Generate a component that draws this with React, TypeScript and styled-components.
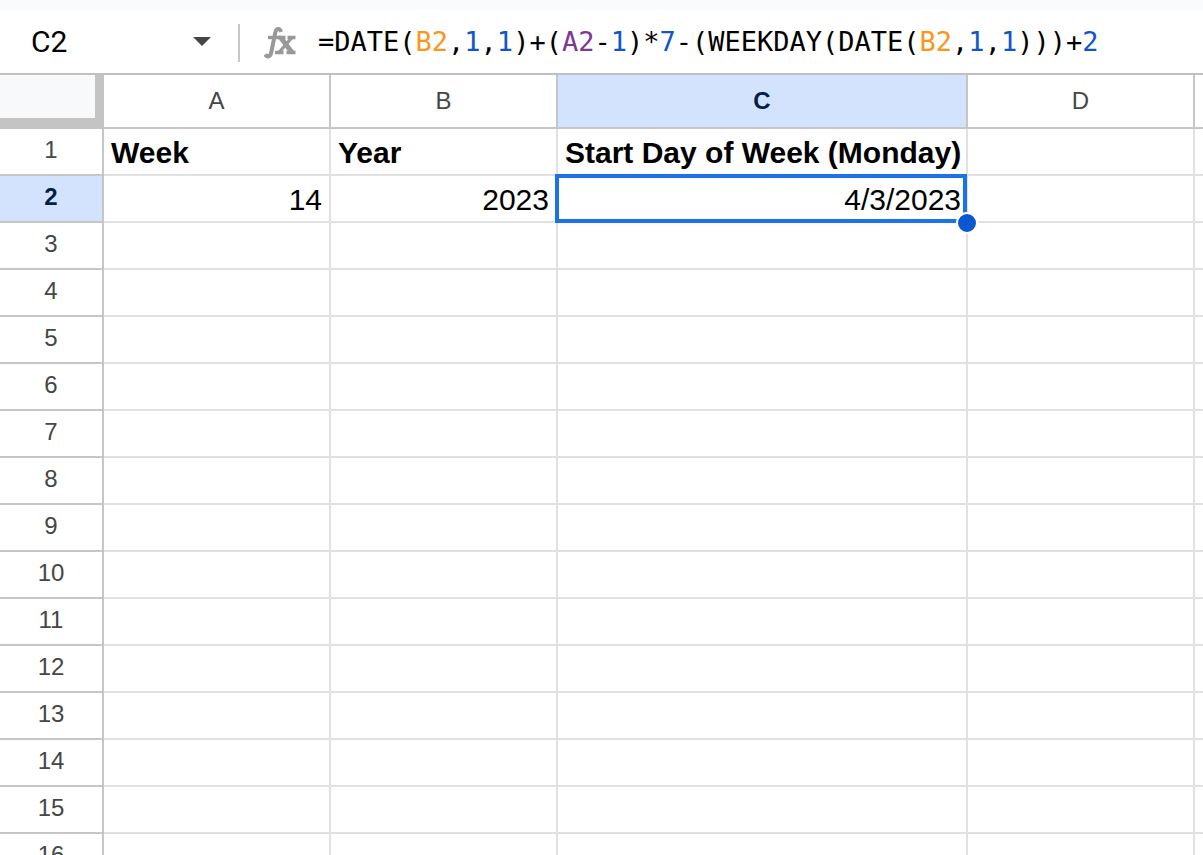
import React from "react";
import styled, { createGlobalStyle } from "styled-components";

const GlobalStyle = createGlobalStyle`
  * { box-sizing: border-box; }
  body { margin: 0; background: #ffffff; overflow: hidden; }
`;

const barFont = `Roboto, "Liberation Sans", sans-serif`;
const sheetFont = `"Liberation Sans", Arial, sans-serif`;
const line = "#c4c7c5";
const gridLine = "#e1e1e1";

const Page = styled.main`
  display: flex;
  flex-direction: column;
  height: 100vh;
  overflow: hidden;
  border-top: 10px solid #f9fbfd;
`;

const FormulaBar = styled.header`
  display: flex;
  align-items: center;
  flex: none;
  height: 65px;
  padding-top: 2px;
  border-bottom: 2px solid #c0c0c0;
`;

const NameBox = styled.div`
  display: flex;
  align-items: center;
  flex: none;
  width: 240px;
  height: 38px;
  padding: 0 19px 2px 23px;
  border-right: 2px solid #c7c7c7;
`;

const NameInput = styled.input`
  flex: 1;
  min-width: 0;
  height: 36px;
  padding: 0 8px;
  border: 0;
  outline: 0;
  background: transparent;
  color: #000000;
  font: 30px ${barFont};
`;

const MenuButton = styled.button`
  display: flex;
  align-items: center;
  justify-content: center;
  width: 34px;
  height: 34px;
  padding: 0;
  border: 0;
  background: transparent;
`;

const FunctionIcon = styled.svg`
  flex: none;
  width: 32px;
  height: 32px;
  margin: 0 22px 0 24px;
`;

const FormulaText = styled.div`
  flex: 1;
  min-width: 0;
  padding-bottom: 2px;
  overflow: hidden;
  outline: 0;
  white-space: pre;
  color: #000000;
  font: 27px/36px "DejaVu Sans Mono", "Liberation Mono", monospace;
`;

const tones = {
  plain: "#000000",
  number: "#1155cc",
  yearRef: "#f7981d",
  weekRef: "#7e3794",
};

type Tone = keyof typeof tones;

const Token = styled.span<{ $tone: Tone }>`
  color: ${(p) => tones[p.$tone]};
`;

const SheetView = styled.section`
  flex: 1;
  min-height: 0;
  overflow: hidden;
`;

const Sheet = styled.table`
  width: 100%;
  table-layout: fixed;
  border-collapse: separate;
  border-spacing: 0;
`;

const Column = styled.col<{ $width?: number }>`
  width: ${(p) => (p.$width ? `${p.$width}px` : "auto")};
`;

const Corner = styled.td`
  padding: 0;
  border-right: 9px solid #c4c4c4;
  border-bottom: 11px solid #c4c4c4;
  background: #f8f9fa;
`;

const HeaderCell = styled.th<{ $active: boolean }>`
  height: ${(p) => (p.scope === "col" ? 54 : 47)}px;
  padding: ${(p) => (p.scope === "col" ? "0" : "0 0 4px")};
  border-right: 2px solid ${line};
  border-bottom: 2px solid ${line};
  background: ${(p) => (p.$active ? "#d3e3fd" : "#ffffff")};
  color: ${(p) => (p.$active ? "#041e49" : "#444746")};
  font: ${(p) => (p.$active ? 700 : 400)} 24px/28px ${sheetFont};
  text-align: center;
  vertical-align: middle;
`;

const Cell = styled.td<{ $bold?: boolean; $numeric?: boolean; $fitted?: boolean }>`
  position: relative;
  height: 47px;
  padding: 2px ${(p) => (p.$fitted ? 5 : 7)}px 0 7px;
  border-right: 2px solid ${gridLine};
  border-bottom: 2px solid ${gridLine};
  color: #000000;
  font: ${(p) => (p.$bold ? 700 : 400)} 30px/36px ${sheetFont};
  text-align: ${(p) => (p.$numeric ? "right" : "left")};
  white-space: nowrap;
`;

const Filler = styled.td<{ $heading?: boolean }>`
  padding: 0;
  border-bottom: 2px solid ${(p) => (p.$heading ? line : gridLine)};
`;

const Selection = styled.div`
  position: absolute;
  z-index: 1;
  inset: -2px -1px -2px -3px;
  border: 4px solid #1a73e8;
  pointer-events: none;
`;

const FillHandle = styled.span`
  position: absolute;
  right: -15px;
  bottom: -15px;
  width: 22px;
  height: 22px;
  border: 2px solid #ffffff;
  border-radius: 50%;
  background: #0b57d0;
`;

const formula: [string, Tone][] = [
  ["=DATE(", "plain"],
  ["B2", "yearRef"],
  [",", "plain"],
  ["1", "number"],
  [",", "plain"],
  ["1", "number"],
  [")+(", "plain"],
  ["A2", "weekRef"],
  ["-", "plain"],
  ["1", "number"],
  [")*", "plain"],
  ["7", "number"],
  ["-(WEEKDAY(DATE(", "plain"],
  ["B2", "yearRef"],
  [",", "plain"],
  ["1", "number"],
  [",", "plain"],
  ["1", "number"],
  [")))+", "plain"],
  ["2", "number"],
];

const columns = [
  { name: "A", width: 227 },
  { name: "B", width: 227 },
  { name: "C", width: 410 },
  { name: "D", width: 227 },
];

const rows = Array.from({ length: 16 }, (_, i) => i + 1);

const values: Record<string, string> = {
  A1: "Week",
  B1: "Year",
  C1: "Start Day of Week (Monday)",
  A2: "14",
  B2: "2023",
  C2: "4/3/2023",
};

const selected = { column: "C", row: 2 };

export default function App() {
  return (
    <Page>
      <GlobalStyle />
      <FormulaBar>
        <NameBox>
          <NameInput aria-label="Name box" defaultValue="C2" />
          <MenuButton type="button" aria-label="Named ranges">
            <svg width="18" height="9" viewBox="0 0 18 9" aria-hidden="true">
              <path d="M0 0h18L9 9z" fill="#444746" />
            </svg>
          </MenuButton>
        </NameBox>
        <FunctionIcon viewBox="0 0 32 32" aria-hidden="true">
          <g fill="none" stroke="#999999">
            <path
              d="M17 5C16 1.200 12.600 1 11.400 5L7.200 25.500C6.400 29.800 3.200 30.600 1.200 27.400"
              strokeWidth="4"
            />
            <path d="M4 10.500H17" strokeWidth="3.400" />
            <path
              d="M14 10.500H21.500M23.500 10.500H31.500M11 25.500H19.500M22.500 25.500H31.500"
              strokeWidth="3.400"
            />
            <path d="M17 11L28 25.500" strokeWidth="5" />
            <path d="M27.500 11L15 25.500" strokeWidth="3.400" />
          </g>
        </FunctionIcon>
        <FormulaText
          role="textbox"
          aria-label="Formula bar"
          contentEditable
          suppressContentEditableWarning
          spellCheck={false}
        >
          {formula.map(([text, tone], i) => (
            <Token key={i} $tone={tone}>
              {text}
            </Token>
          ))}
        </FormulaText>
      </FormulaBar>
      <SheetView>
        <Sheet>
          <colgroup>
            <Column $width={104} />
            {columns.map((c) => (
              <Column key={c.name} $width={c.width} />
            ))}
            <Column />
          </colgroup>
          <thead>
            <tr>
              <Corner />
              {columns.map((c) => (
                <HeaderCell key={c.name} scope="col" $active={c.name === selected.column}>
                  {c.name}
                </HeaderCell>
              ))}
              <Filler $heading />
            </tr>
          </thead>
          <tbody>
            {rows.map((row) => (
              <tr key={row}>
                <HeaderCell scope="row" $active={row === selected.row}>
                  {row}
                </HeaderCell>
                {columns.map((c) => (
                  <Cell
                    key={c.name}
                    $bold={row === 1}
                    $numeric={row === 2}
                    $fitted={c.name === "C"}
                  >
                    {values[c.name + row]}
                    {c.name === selected.column && row === selected.row && (
                      <Selection>
                        <FillHandle />
                      </Selection>
                    )}
                  </Cell>
                ))}
                <Filler />
              </tr>
            ))}
          </tbody>
        </Sheet>
      </SheetView>
    </Page>
  );
}
